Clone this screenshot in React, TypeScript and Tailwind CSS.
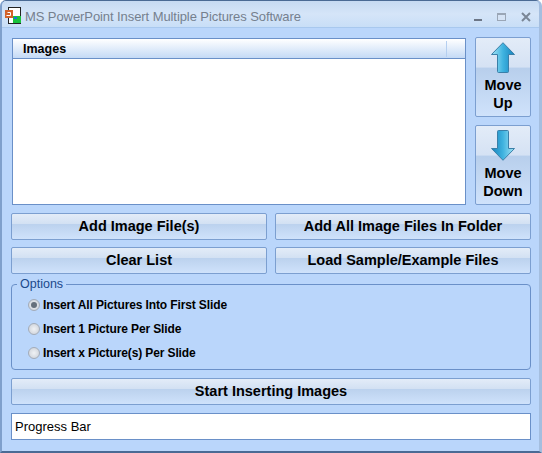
import React from "react";

const font = "font-['Liberation_Sans',Arial,sans-serif]";

function PushButton({ label, className = "" }: { label: string; className?: string }) {
  return (
    <button
      className={`flex h-[27px] items-center justify-center rounded-[2px] border border-[#7c9fd0] bg-[linear-gradient(to_bottom,#e3ecf8_0%,#d3e1f3_38%,#bcd2ee_42%,#cfe2fb_100%)] text-[14.5px] font-bold text-black ${className}`}
    >
      {label}
    </button>
  );
}

function ArrowIcon({ down = false }: { down?: boolean }) {
  return (
    <svg width="24" height="31" viewBox="0 0 24 31" className={down ? "rotate-180" : ""}>
      <defs>
        <linearGradient id={down ? "arrowD" : "arrowU"} x1="0" x2="1" y1="0" y2="0">
          <stop offset="0" stopColor="#a5e4f5" />
          <stop offset="0.5" stopColor="#3fb3e0" />
          <stop offset="1" stopColor="#1782bd" />
        </linearGradient>
      </defs>
      <path
        d="M12 0.7 L23.5 12.5 L17.5 12.5 L17.5 29.5 Q17.5 30.5 16.5 30.5 L7.5 30.5 Q6.5 30.5 6.5 29.5 L6.5 12.5 L0.5 12.5 Z"
        fill={`url(#${down ? "arrowD" : "arrowU"})`}
        stroke="#3a7fa8"
        strokeWidth="1"
      />
    </svg>
  );
}

function MoveButton({ top, bottom, down = false }: { top: string; bottom: string; down?: boolean }) {
  return (
    <button className="flex h-[80px] w-[56px] flex-col items-center rounded-[2px] border border-[#7c9fd0] bg-[linear-gradient(to_bottom,#e3ecf8_0%,#d5e2f4_37%,#b8cfec_39%,#cfe2fb_100%)] pt-[4px] text-[14.5px] leading-[18px] font-bold text-black">
      <ArrowIcon down={down} />
      <span className="mt-[3px]">{top}</span>
      <span>{bottom}</span>
    </button>
  );
}

function Radio({ label, checked = false }: { label: string; checked?: boolean }) {
  return (
    <div className="flex h-[24px] items-center gap-[3px]">
      <span className="flex h-[12px] w-[12px] items-center justify-center rounded-full border border-[#a3acb8] bg-[radial-gradient(circle,#f0f2f5,#c9ced6)]">
        {checked && <span className="h-[6px] w-[6px] rounded-full bg-[#66707c]" />}
      </span>
      <span className="text-[12px] tracking-[-0.12px] font-bold text-black">{label}</span>
    </div>
  );
}

function WindowIcon() {
  return (
    <svg width="20" height="20" viewBox="0 0 20 20">
      <rect x="3.5" y="0.5" width="12" height="16" fill="#fff" stroke="#222" />
      <rect x="8" y="9" width="8" height="7" fill="#18c23c" />
      <rect x="9" y="10" width="3" height="2" fill="#1c6fe0" />
      <rect x="0" y="3" width="8" height="8" fill="#d2622a" />
      <path d="M2.5 5.5 H5.5 V8.5 H1.5" fill="none" stroke="#fff" />
    </svg>
  );
}

export default function App() {
  return (
    <div
      className={`flex h-[453px] w-[542px] flex-col overflow-hidden rounded-t-[6px] border-t border-r-[3px] border-b-2 border-l-2 border-t-[#4a6a94] border-r-[#a4bedf] border-b-[#4a6a94] border-l-[#7fa0cc] bg-[#bad6fb] ${font}`}
    >
      <div className="flex h-[27px] shrink-0 items-center border-b border-[#a8c8ee] bg-[linear-gradient(to_bottom,#c6daf2,#d5e5f8_50%,#c8def7)] pt-[5px] pr-[8px] pl-[3px]">
        <WindowIcon />
        <span className="text-[13px] tracking-[-0.08px] text-[#75808e]">MS PowerPoint Insert Multiple Pictures Software</span>
        <div className="ml-auto flex items-center gap-[15px]">
          <span className="mt-[6px] h-[2px] w-[8px] bg-[#6c7686]" />
          <span className="h-[8px] w-[9px] border border-t-2 border-[#9aa6b6] bg-[#d5e3f5]" />
          <svg width="10" height="10" viewBox="0 0 10 10">
            <path d="M1 1 L9 9 M9 1 L1 9" stroke="#7a8696" strokeWidth="2" />
          </svg>
        </div>
      </div>

      <div className="flex flex-1 flex-col pt-[10px] pr-[8px] pl-[9px]">
        <div className="flex gap-[9px]">
          <div className="ml-[1px] h-[167px] flex-1 border border-[#6a90c8] bg-white">
            <div className="flex h-[20px] items-center border-b border-[#6a90c8] bg-[linear-gradient(to_bottom,#ffffff,#c4daf6)] pt-[1px] pl-[10px] text-[12.5px] font-bold text-black">
              <span className="flex-1">Images</span>
              <span className="mr-[18px] h-[16px] w-px bg-[#b5cff0]" />
            </div>
          </div>
          <div className="-mt-[1px] flex flex-col gap-[8px]">
            <MoveButton top="Move" bottom="Up" />
            <MoveButton top="Move" bottom="Down" down />
          </div>
        </div>

        <div className="mt-[8px] grid grid-cols-2 gap-x-[8px] gap-y-[7px]">
          <PushButton label="Add Image File(s)" />
          <PushButton label="Add All Image Files In Folder" />
          <PushButton label="Clear List" />
          <PushButton label="Load Sample/Example Files" />
        </div>

        <fieldset className="mt-[3px] h-[93px] rounded-[4px] border border-[#6a90c8] pl-[16px]">
          <legend className="-ml-[11px] px-[3px] text-[12.5px] leading-[14px] text-[#1a4a8c]">Options</legend>
          <div className="mt-[2px] flex flex-col">
            <Radio label="Insert All Pictures Into First Slide" checked />
            <Radio label="Insert 1 Picture Per Slide" />
            <Radio label="Insert x Picture(s) Per Slide" />
          </div>
        </fieldset>

        <PushButton label="Start Inserting Images" className="mt-[8px]" />

        <div className="mt-[8px] flex h-[27px] items-center border border-[#6a90c8] bg-white pl-[3px] text-[13px] text-black">
          Progress Bar
        </div>
      </div>
    </div>
  );
}
